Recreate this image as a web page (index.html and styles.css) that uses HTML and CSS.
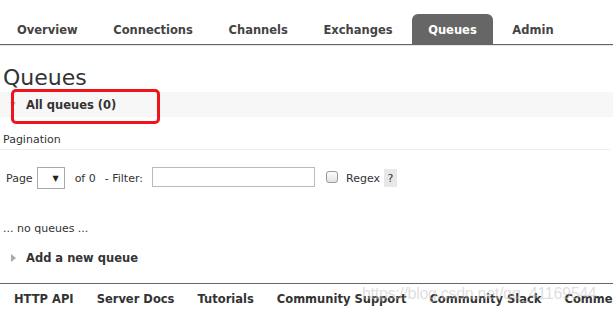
FILE: index.html
```html
<!DOCTYPE html>
<html>
<head>
<meta charset="utf-8">
<link rel="stylesheet" href="styles.css">
</head>
<body>
<div class="page">
  <nav class="tabs">
    <a class="tab">Overview</a>
    <a class="tab">Connections</a>
    <a class="tab">Channels</a>
    <a class="tab">Exchanges</a>
    <a class="tab active">Queues</a>
    <a class="tab">Admin</a>
  </nav>
  <main class="main">
    <h1 class="title">Queues</h1>
    <div class="section-head">
      <span class="tri-down"></span>
      <span class="section-title">All queues (0)</span>
      <div class="annot"></div>
    </div>
    <div class="pag-label">Pagination</div>
    <div class="filter-row">
      <span>Page</span>
      <span class="select"><span class="arrow">&#9660;</span></span>
      <span class="of">of 0</span>
      <span class="flt">- Filter:</span>
      <span class="input"></span>
      <span class="checkbox"></span>
      <span class="regex">Regex</span>
      <span class="help">?</span>
    </div>
    <div class="empty">... no queues ...</div>
    <div class="add-row">
      <span class="tri-right"></span>
      <span class="section-title">Add a new queue</span>
    </div>
  </main>
  <footer class="footer">
    <a>HTTP API</a>
    <a>Server Docs</a>
    <a>Tutorials</a>
    <a>Community Support</a>
    <a>Community Slack</a>
    <a>Commercial Support</a>
    <span class="watermark">https://blog.csdn.net/qq_41169544</span>
  </footer>
</div>
</body>
</html>
```
FILE: styles.css
```css
* { box-sizing: border-box; }
html, body { margin: 0; padding: 0; background: #fff; }
body {
  font-family: "DejaVu Sans", Verdana, sans-serif;
  font-size: 11px;
  color: #333;
  width: 613px;
  height: 310px;
  overflow: hidden;
}
.page { position: relative; width: 613px; }
.tabs {
  display: flex;
  margin-top: 14px;
  padding-left: 1px;
  gap: 3.6px;
  border-bottom: 1px solid #666;
  box-shadow: 0 1px 0 #e4e4e4;
  height: 31px;
}
.tab {
  display: flex;
  align-items: center;
  padding: 0 16px;
  height: 31px;
  font-weight: bold;
  font-size: 11.5px;
  color: #444;
  border-radius: 6px 6px 0 0;
  white-space: nowrap;
}
.tab.active { background: #666; color: #fff; }
.main { padding: 0 3px; }
.title {
  font-size: 22px;
  font-weight: normal;
  margin: 20px 0 0;
  line-height: 26px;
  color: #333;
}
.section-head {
  position: relative;
  display: flex;
  align-items: center;
  height: 25px;
  margin-top: 1px;
  margin-left: -3px;
  margin-right: -3px;
  padding-left: 10px;
  background: #f7f7f7;
}
.tri-down {
  width: 0; height: 0;
  border-left: 3px solid transparent;
  border-right: 3px solid transparent;
  border-top: 5px solid #bbb;
  margin-right: 10px;
}
.section-title { font-weight: bold; font-size: 11.5px; color: #333; }
.annot {
  position: absolute;
  left: 11px; top: -3px;
  width: 149px; height: 35px;
  border: 3px solid #f0141a;
  border-radius: 5px;
}
.pag-label {
  margin-top: 16px;
  line-height: 14px;
  padding-bottom: 2px;
  border-bottom: 1px solid #eee;
  margin-left: -3px; padding-left: 3px;
}
.filter-row {
  display: flex;
  align-items: center;
  height: 22px;
  margin-top: 17px;
  padding-left: 3px;
  color: #333;
}
.select {
  width: 28px; height: 22px;
  border: 1px solid #aaa;
  margin-left: 4px;
  display: flex; align-items: center; justify-content: flex-end;
  padding-right: 5px;
  background: #fff;
}
.arrow { font-size: 8px; color: #222; }
.of { margin-left: 10px; }
.flt { margin-left: 9px; }
.input {
  width: 163px; height: 20px;
  border: 1px solid #bbb;
  margin-left: 9px;
  margin-top: -2px;
}
.checkbox {
  width: 12px; height: 12px;
  border: 1px solid #999;
  border-radius: 3px;
  background: linear-gradient(#fcfcfc, #e4e4e4);
  margin-left: 11px;
  margin-top: -3px;
}
.regex { margin-left: 8px; }
.help {
  margin-left: 4px;
  background: #e8e8e8;
  width: 13px; height: 18px;
  display: flex; align-items: center; justify-content: center;
}
.empty { margin-top: 33px; line-height: 14px; }
.add-row {
  display: flex;
  align-items: center;
  margin-top: 15px;
  padding-left: 8px;
  height: 14px;
}
.tri-right {
  width: 0; height: 0;
  border-top: 4px solid transparent;
  border-bottom: 4px solid transparent;
  border-left: 5px solid #aaa;
  margin-right: 10px;
}
.footer {
  position: relative;
  margin-top: 18px;
  border-top: 1px solid #666;
  display: flex;
  gap: 23px;
  padding-left: 14px;
  padding-top: 8px;
  white-space: nowrap;
  font-weight: bold;
  font-size: 11.5px;
  color: #333;
}
.watermark {
  position: absolute;
  left: 362px; top: 1px;
  font-weight: normal;
  font-size: 16px;
  letter-spacing: -0.3px;
  color: rgba(195,195,195,0.55);
  font-family: "Liberation Sans", sans-serif;
}
```
